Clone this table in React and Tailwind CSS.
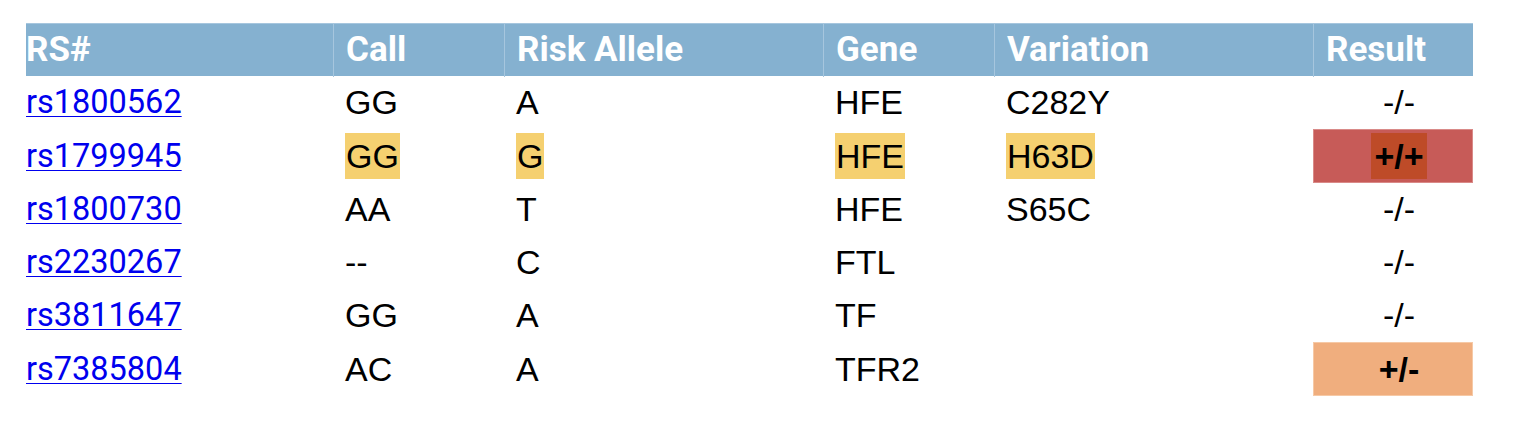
import React from 'react'

const COLS = 'grid grid-cols-[307px_171px_319px_171px_319px_160px]'

const HEADERS = ['RS#', 'Call', 'Risk Allele', 'Gene', 'Variation', 'Result']

/* hl: which cells get the yellow text highlight; tone: result cell colour */
const ROWS = [
  { rs: 'rs1800562', call: 'GG', risk: 'A', gene: 'HFE', variation: 'C282Y', result: '-/-' },
  { rs: 'rs1799945', call: 'GG', risk: 'G', gene: 'HFE', variation: 'H63D', result: '+/+', hl: true, tone: 'hom' },
  { rs: 'rs1800730', call: 'AA', risk: 'T', gene: 'HFE', variation: 'S65C', result: '-/-' },
  { rs: 'rs2230267', call: '--', risk: 'C', gene: 'FTL', variation: '', result: '-/-' },
  { rs: 'rs3811647', call: 'GG', risk: 'A', gene: 'TF', variation: '', result: '-/-' },
  { rs: 'rs7385804', call: 'AC', risk: 'A', gene: 'TFR2', variation: '', result: '+/-', tone: 'het' },
]

function Mark({ on, children }) {
  if (!on || !children) return <span>{children}</span>
  return <span className="inline-block bg-[#f5d070] px-px leading-[46px]">{children}</span>
}

function ResultCell({ tone, children }) {
  if (tone === 'hom') {
    return (
      <div className="h-full flex items-center justify-center pl-3 bg-[#c75b58] border border-[#d98a88]">
        <span className="inline-block bg-[#be4b28] px-[3px] leading-[46px] font-bold">{children}</span>
      </div>
    )
  }
  if (tone === 'het') {
    return (
      <div className="h-full flex items-center justify-center pl-3 bg-[#f0ae7e] border border-[#f6c9a6] font-bold">
        {children}
      </div>
    )
  }
  return <div className="h-full flex items-center justify-center pl-3">{children}</div>
}

export default function App() {
  return (
    <div className="w-[1520px] h-[446px] bg-white pt-[23px] pl-[26px]">
      <div className="w-[1447px]">

        {/* Header */}
        <div className={`${COLS} h-[53px] bg-[#85b1d0] border-t border-[#a6c6de] font-['Roboto',sans-serif]`}>
          {HEADERS.map((h, i) => (
            <div key={h}
              className={`flex items-center text-[35px] font-bold text-white ${i === 0 ? '' : 'pl-3 border-l border-[#a6c6de]'}`}>
              {h}
            </div>
          ))}
        </div>

        {/* Body rows */}
        {ROWS.map(r => (
          <div key={r.rs} className={`${COLS} h-[53.3px] text-[34px] text-black font-['Liberation_Sans',Arial,sans-serif]`}>
            <div className="flex items-center">
              <a href="#" className="text-[32.5px] font-['Roboto',sans-serif] text-[#0000ee] underline underline-offset-[3px] decoration-1">{r.rs}</a>
            </div>
            <div className="flex items-center pl-3"><Mark on={r.hl}>{r.call}</Mark></div>
            <div className="flex items-center pl-3"><Mark on={r.hl}>{r.risk}</Mark></div>
            <div className="flex items-center pl-3"><Mark on={r.hl}>{r.gene}</Mark></div>
            <div className="flex items-center pl-3"><Mark on={r.hl}>{r.variation}</Mark></div>
            <ResultCell tone={r.tone}>{r.result}</ResultCell>
          </div>
        ))}
      </div>
    </div>
  )
}
